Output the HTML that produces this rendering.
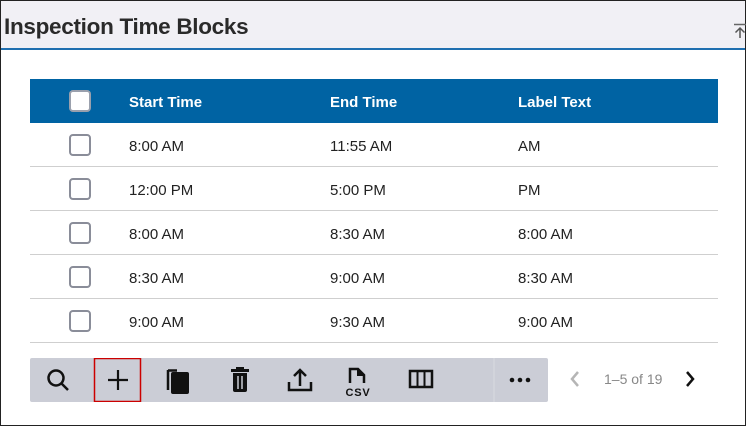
<!DOCTYPE html>
<html><head><meta charset="utf-8"><style>
*{margin:0;padding:0;box-sizing:border-box}
body{width:746px;height:426px;background:#fff;font-family:"Liberation Sans",sans-serif;position:relative;overflow:hidden}
.frame{position:absolute;left:0;top:0;width:746px;height:426px;border:1px solid #222}
.hdr{position:absolute;left:1px;top:1px;width:744px;height:49px;background:#f1f0f5;border-bottom:2px solid #1f6fb0}
.hdr h1{position:absolute;left:3px;top:13px;font-size:22.5px;font-weight:bold;color:#2a2a2a;letter-spacing:-0.3px}
.th{position:absolute;left:30px;top:79px;width:688px;height:44px;background:#0063a3;color:#fff;font-weight:bold;font-size:15px}
.th span,.row span{position:absolute;top:15px}
.cb{position:absolute;left:39px;width:22px;height:22px;border:2px solid #8a8d99;border-radius:4px;background:#fff}
.row{position:absolute;left:30px;width:688px;height:44px;border-bottom:1px solid #cfcfcf;font-size:15px;color:#222}
.tb{position:absolute;left:30px;top:358px;width:518px;height:44px;background:#cbcdd6;border-radius:2px}
.ic{position:absolute;top:0;height:44px}
</style></head><body>
<div class="frame"></div>
<div class="hdr"><h1>Inspection Time Blocks</h1>
<svg style="position:absolute;left:731px;top:22px" width="14" height="16" viewBox="0 0 14 16"><line x1="2" y1="1.5" x2="14" y2="1.5" stroke="#666" stroke-width="1.5"/><path d="M8 15V5M3.5 9.5L8 5l4.5 4.5" fill="none" stroke="#555" stroke-width="1.5"/></svg>
</div>
<div class="th"><div class="cb" style="top:11px;border-color:#9aa0ad"></div><span style="left:99px">Start Time</span><span style="left:300px">End Time</span><span style="left:488px">Label Text</span></div>
<div class="row" style="top:123px"><div class="cb" style="top:11px"></div><span style="left:99px">8:00 AM</span><span style="left:300px">11:55 AM</span><span style="left:488px">AM</span></div>
<div class="row" style="top:167px"><div class="cb" style="top:11px"></div><span style="left:99px">12:00 PM</span><span style="left:300px">5:00 PM</span><span style="left:488px">PM</span></div>
<div class="row" style="top:211px"><div class="cb" style="top:11px"></div><span style="left:99px">8:00 AM</span><span style="left:300px">8:30 AM</span><span style="left:488px">8:00 AM</span></div>
<div class="row" style="top:255px"><div class="cb" style="top:11px"></div><span style="left:99px">8:30 AM</span><span style="left:300px">9:00 AM</span><span style="left:488px">8:30 AM</span></div>
<div class="row" style="top:299px"><div class="cb" style="top:11px"></div><span style="left:99px">9:00 AM</span><span style="left:300px">9:30 AM</span><span style="left:488px">9:00 AM</span></div>
<div class="tb">
<svg class="ic" style="left:0" width="518" height="44" viewBox="0 0 518 44">
<circle cx="26" cy="20" r="7.5" fill="none" stroke="#111" stroke-width="2.5"/><line x1="31.5" y1="25.5" x2="38" y2="32" stroke="#111" stroke-width="2.5"/>
<rect x="64.5" y="0.5" width="46" height="43" fill="none" stroke="#c00" stroke-width="1.5"/>
<path d="M88 12v20M78 22h20" stroke="#111" stroke-width="2.2"/>
<path d="M138 12v20" stroke="#111" stroke-width="2.5" fill="none"/><path d="M138 12.5h9" stroke="#111" stroke-width="2.5"/>
<rect x="141" y="14" width="18" height="22" rx="2" fill="#111"/>
<rect x="201" y="11" width="18" height="3" fill="#111"/><rect x="206" y="9" width="8" height="3" fill="#111"/>
<path d="M203 15h14v17a2 2 0 0 1-2 2h-10a2 2 0 0 1-2-2z" fill="#111"/><path d="M208 18v13M212 18v13" stroke="#cbcdd6" stroke-width="1.5"/>
<path d="M259 24v8h22v-8" fill="none" stroke="#111" stroke-width="2.5"/><path d="M270 28V12M264 18l6-6 6 6" fill="none" stroke="#111" stroke-width="2.5"/>
<path d="M320 25V11h8l6 6v8" fill="none" stroke="#111" stroke-width="2.5"/><path d="M327 10v8h8z" fill="#111"/>
<text x="328" y="38" font-family="Liberation Sans" font-weight="bold" font-size="11" text-anchor="middle" fill="#111" letter-spacing="0.8">CSV</text>
<rect x="380" y="13" width="22" height="16" fill="none" stroke="#111" stroke-width="2.5"/><path d="M387.5 13v16M394.5 13v16" stroke="#111" stroke-width="2"/>
<line x1="464" y1="0" x2="464" y2="44" stroke="#d8dae0" stroke-width="1"/>
<circle cx="482" cy="22" r="2.3" fill="#111"/><circle cx="490" cy="22" r="2.3" fill="#111"/><circle cx="498" cy="22" r="2.3" fill="#111"/>
</svg>
</div>
<svg style="position:absolute;left:568px;top:370px" width="14" height="18"><path d="M10 2L4 9l6 7" fill="none" stroke="#b5b5b5" stroke-width="2.5"/></svg>
<div style="position:absolute;left:604px;top:371px;font-size:14px;color:#888">1–5 of 19</div>
<svg style="position:absolute;left:683px;top:370px" width="14" height="18"><path d="M4 2l6 7-6 7" fill="none" stroke="#111" stroke-width="2.5"/></svg>
</body></html>
